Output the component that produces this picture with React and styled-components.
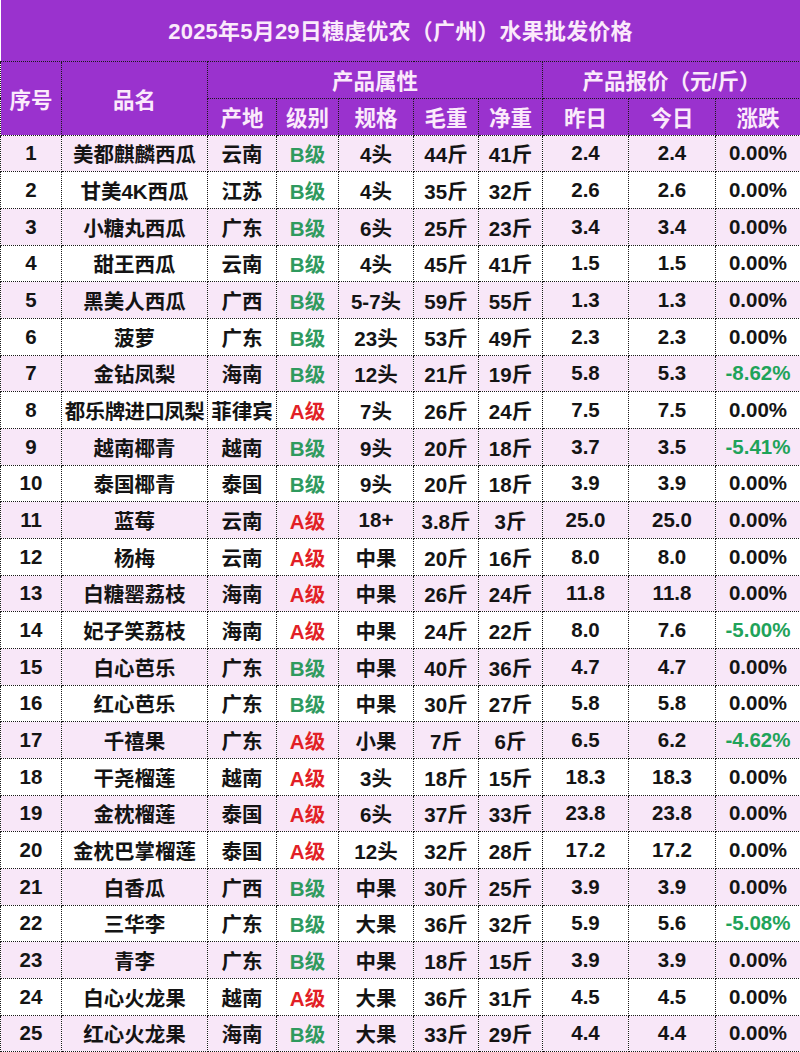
import React from "react";
import styled, { createGlobalStyle } from "styled-components";

const Global = createGlobalStyle`
  html, body { margin: 0; padding: 0; background: #fff; }
  body { font-family: "Liberation Sans", "Noto Sans CJK SC", sans-serif; }
`;

const PURPLE = "#9A32CE";
const HEAD_TEXT = "#FBEAFB";
const PINK = "#F8E7F8";
const LINE = "1px dotted #1a1a1a";

const Table = styled.table`
  width: 800px;
  border-collapse: collapse;
  table-layout: fixed;
  font-family: "Liberation Sans", "Noto Sans CJK SC", sans-serif;
  font-weight: 700;
`;

const TitleRow = styled.tr`
  height: 61px;
`;

const HeadRow = styled.tr`
  height: 37px;
`;

const TitleCell = styled.th`
  padding: 0 0 2px;
  background: ${PURPLE};
  color: ${HEAD_TEXT};
  font-size: 22px;
  font-weight: 700;
  text-align: center;
  border-bottom: ${LINE};
  letter-spacing: 0.2px;
`;

const HeadCell = styled.th`
  padding: 0;
  background: ${PURPLE};
  color: ${HEAD_TEXT};
  font-size: 21.5px;
  font-weight: 700;
  text-align: center;
  border: ${LINE};
  white-space: nowrap;
`;

const Row = styled.tr`
  height: 36.68px;
  background: ${(p) => (p.$alt ? "#ffffff" : PINK)};
`;

const Cell = styled.td`
  padding: 0;
  text-align: center;
  font-size: 20.5px;
  color: ${(p) => p.$color || "#141414"};
  border: ${LINE};
  white-space: nowrap;
  overflow: hidden;
  letter-spacing: ${(p) => (p.$tight ? "-0.6px" : "0")};
`;

const widths = [61, 146, 69, 62, 75, 65, 64, 86, 87, 85];

const data = [
  ["1", "美都麒麟西瓜", "云南", "B", "4头", "44斤", "41斤", "2.4", "2.4", "0.00%"],
  ["2", "甘美4K西瓜", "江苏", "B", "4头", "35斤", "32斤", "2.6", "2.6", "0.00%"],
  ["3", "小糖丸西瓜", "广东", "B", "6头", "25斤", "23斤", "3.4", "3.4", "0.00%"],
  ["4", "甜王西瓜", "云南", "B", "4头", "45斤", "41斤", "1.5", "1.5", "0.00%"],
  ["5", "黑美人西瓜", "广西", "B", "5-7头", "59斤", "55斤", "1.3", "1.3", "0.00%"],
  ["6", "菠萝", "广东", "B", "23头", "53斤", "49斤", "2.3", "2.3", "0.00%"],
  ["7", "金钻凤梨", "海南", "B", "12头", "21斤", "19斤", "5.8", "5.3", "-8.62%"],
  ["8", "都乐牌进口凤梨", "菲律宾", "A", "7头", "26斤", "24斤", "7.5", "7.5", "0.00%"],
  ["9", "越南椰青", "越南", "B", "9头", "20斤", "18斤", "3.7", "3.5", "-5.41%"],
  ["10", "泰国椰青", "泰国", "B", "9头", "20斤", "18斤", "3.9", "3.9", "0.00%"],
  ["11", "蓝莓", "云南", "A", "18+", "3.8斤", "3斤", "25.0", "25.0", "0.00%"],
  ["12", "杨梅", "云南", "A", "中果", "20斤", "16斤", "8.0", "8.0", "0.00%"],
  ["13", "白糖罂荔枝", "海南", "A", "中果", "26斤", "24斤", "11.8", "11.8", "0.00%"],
  ["14", "妃子笑荔枝", "海南", "A", "中果", "24斤", "22斤", "8.0", "7.6", "-5.00%"],
  ["15", "白心芭乐", "广东", "B", "中果", "40斤", "36斤", "4.7", "4.7", "0.00%"],
  ["16", "红心芭乐", "广东", "B", "中果", "30斤", "27斤", "5.8", "5.8", "0.00%"],
  ["17", "千禧果", "广东", "A", "小果", "7斤", "6斤", "6.5", "6.2", "-4.62%"],
  ["18", "干尧榴莲", "越南", "A", "3头", "18斤", "15斤", "18.3", "18.3", "0.00%"],
  ["19", "金枕榴莲", "泰国", "A", "6头", "37斤", "33斤", "23.8", "23.8", "0.00%"],
  ["20", "金枕巴掌榴莲", "泰国", "A", "12头", "32斤", "28斤", "17.2", "17.2", "0.00%"],
  ["21", "白香瓜", "广西", "B", "中果", "30斤", "25斤", "3.9", "3.9", "0.00%"],
  ["22", "三华李", "广东", "B", "大果", "36斤", "32斤", "5.9", "5.6", "-5.08%"],
  ["23", "青李", "广东", "B", "中果", "18斤", "15斤", "3.9", "3.9", "0.00%"],
  ["24", "白心火龙果", "越南", "A", "大果", "36斤", "31斤", "4.5", "4.5", "0.00%"],
  ["25", "红心火龙果", "海南", "B", "大果", "33斤", "29斤", "4.4", "4.4", "0.00%"],
];

const GRADE_COLOR = { A: "#E21F26", B: "#2F9A5E" };
const DROP_COLOR = "#1FA35A";

export default function App() {
  return (
    <>
      <Global />
      <Table>
        <colgroup>
          {widths.map((w, i) => (
            <col key={i} style={{ width: w }} />
          ))}
        </colgroup>
        <thead>
          <TitleRow>
            <TitleCell colSpan={10}>2025年5月29日穗虔优农（广州）水果批发价格</TitleCell>
          </TitleRow>
          <HeadRow>
            <HeadCell rowSpan={2}>序号</HeadCell>
            <HeadCell rowSpan={2}>品名</HeadCell>
            <HeadCell colSpan={5}>产品属性</HeadCell>
            <HeadCell colSpan={3}>产品报价（元/斤）</HeadCell>
          </HeadRow>
          <HeadRow>
            {["产地", "级别", "规格", "毛重", "净重", "昨日", "今日", "涨跌"].map((t) => (
              <HeadCell key={t}>{t}</HeadCell>
            ))}
          </HeadRow>
        </thead>
        <tbody>
          {data.map((r, i) => (
            <Row key={r[0]} $alt={i % 2 === 1}>
              <Cell>{r[0]}</Cell>
              <Cell $tight={r[1].length >= 7}>{r[1]}</Cell>
              <Cell>{r[2]}</Cell>
              <Cell $color={GRADE_COLOR[r[3]]}>{r[3]}级</Cell>
              <Cell>{r[4]}</Cell>
              <Cell>{r[5]}</Cell>
              <Cell>{r[6]}</Cell>
              <Cell>{r[7]}</Cell>
              <Cell>{r[8]}</Cell>
              <Cell $color={r[9].startsWith("-") ? DROP_COLOR : undefined}>{r[9]}</Cell>
            </Row>
          ))}
        </tbody>
      </Table>
    </>
  );
}
